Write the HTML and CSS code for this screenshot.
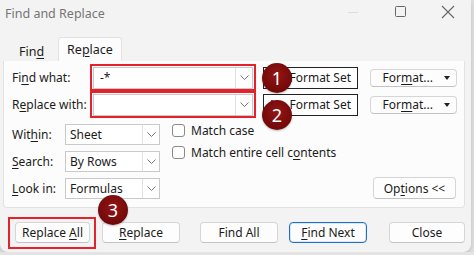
FILE: index.html
```html
<!DOCTYPE html>
<html lang="en">
<head>
  <meta charset="UTF-8">
  <title>Find and Replace</title>
  <link rel="stylesheet" href="styles.css">
</head>
<body>
<div class="window">

  <!-- Title bar -->
  <div class="titlebar">
    <span class="title">Find and Replace</span>
    <span class="tb-min"></span>
    <svg class="tb-max" width="12" height="12" viewBox="0 0 12 12"><rect x="0.5" y="0.5" width="10" height="10" rx="1" fill="none" stroke="#666" stroke-width="1"/></svg>
    <svg class="tb-close" width="14" height="14" viewBox="0 0 14 14"><path d="M1 1 L13 13 M13 1 L1 13" stroke="#666" stroke-width="1.1" fill="none"/></svg>
  </div>

  <!-- Tabs -->
  <div class="tabs">
    <div class="tab">Fin<u>d</u></div>
    <div class="tab active">Re<u>p</u>lace</div>
  </div>

  <div class="panel">
    <div class="row">
      <span class="label">Fi<u>n</u>d what:</span>
      <div class="mark">
        <div class="combo">
          <span class="combo-text">-*</span>
          <span class="combo-btn"><svg width="9" height="5" viewBox="0 0 9 5"><path d="M0.5 0.5 L4.5 4.5 L8.5 0.5" stroke="#777" fill="none"/></svg></span>
        </div>
      </div>
      <div class="preview">No Format Set</div>
      <button class="btn fmt"><span>For<u>m</u>at...</span><span class="tri"></span></button>
    </div>
    <div class="row">
      <span class="label">R<u>e</u>place with:</span>
      <div class="mark">
        <div class="combo">
          <span class="combo-text"></span>
          <span class="combo-btn"><svg width="9" height="5" viewBox="0 0 9 5"><path d="M0.5 0.5 L4.5 4.5 L8.5 0.5" stroke="#777" fill="none"/></svg></span>
        </div>
      </div>
      <div class="preview">No Format Set</div>
      <button class="btn fmt"><span>For<u>m</u>at...</span><span class="tri"></span></button>
    </div>

    <div class="options">
      <div class="selects">
        <div class="sel-row">
          <span class="sel-label">Wit<u>h</u>in:</span>
          <div class="select"><span class="select-text">Sheet</span><span class="combo-btn"><svg width="9" height="5" viewBox="0 0 9 5"><path d="M0.5 0.5 L4.5 4.5 L8.5 0.5" stroke="#777" fill="none"/></svg></span></div>
        </div>
        <div class="sel-row">
          <span class="sel-label"><u>S</u>earch:</span>
          <div class="select"><span class="select-text">By Rows</span><span class="combo-btn"><svg width="9" height="5" viewBox="0 0 9 5"><path d="M0.5 0.5 L4.5 4.5 L8.5 0.5" stroke="#777" fill="none"/></svg></span></div>
        </div>
        <div class="sel-row">
          <span class="sel-label"><u>L</u>ook in:</span>
          <div class="select"><span class="select-text">Formulas</span><span class="combo-btn"><svg width="9" height="5" viewBox="0 0 9 5"><path d="M0.5 0.5 L4.5 4.5 L8.5 0.5" stroke="#777" fill="none"/></svg></span></div>
        </div>
      </div>
      <div class="checks">
        <label class="check"><span class="box"></span><span>Match case</span></label>
        <label class="check"><span class="box"></span><span>Match entire cell c<u>o</u>ntents</span></label>
      </div>
      <button class="btn options-btn">Op<u>t</u>ions &lt;&lt;</button>
    </div>
  </div>

  <!-- Bottom buttons -->
  <div class="footer">
    <div class="mark-btn"><button class="btn foot w75">Replace <u>A</u>ll</button></div>
    <button class="btn foot w78 ml6"><u>R</u>eplace</button>
    <button class="btn foot w78 ml20">Find All</button>
    <button class="btn foot w78 ml11 primary"><u>F</u>ind Next</button>
    <button class="btn foot w76 ml22">Close</button>
  </div>

  <!-- annotation badges -->
  <span class="badge b1">1</span>
  <span class="badge b2">2</span>
  <span class="badge b3">3</span>
</div>
</body>
</html>
```

FILE: styles.css
```css
* {
  box-sizing: border-box;
}

html {
  background: #e4e4e4;
}

body {
  margin: 0;
  font-family: 'Noto Sans', 'Open Sans', sans-serif;
  font-size: 12px;
  color: #1b1b1b;
}

u {
  text-underline-offset: 2px;
}

.window {
  position: relative;
  width: 471px;
  height: 252px;
  background: #f3f3f3;
  border-radius: 0 0 8px 8px;
  box-shadow: 0 2px 6px rgba(0, 0, 0, 0.18);
}

/* title bar */
.titlebar {
  height: 30px;
  display: flex;
  align-items: center;
  padding-left: 5px;
}

.title {
  color: #757575;
  font-size: 12.5px;
  margin-top: -4px;
}

.tb-min {
  width: 10px;
  height: 1px;
  background: #dcdcdc;
  margin-left: auto;
  margin-top: -6px;
}

.tb-max {
  margin-left: 37px;
  margin-top: -6px;
}

.tb-close {
  margin-left: 34px;
  margin-right: 16px;
  margin-top: -6px;
}

/* tabs */
.tabs {
  height: 31px;
  display: flex;
  align-items: flex-end;
  padding-left: 5px;
}

.tab {
  height: 23px;
  padding-top: 5px;
  width: 53px;
  text-align: center;
  font-size: 12.5px;
}

.tab.active {
  height: 24px;
  width: 64px;
  padding-top: 3px;
  background: #fcfcfc;
  border: 1px solid #e2e2e2;
  border-bottom: none;
  border-radius: 3px 3px 0 0;
}

/* main panel */
.panel {
  width: 462px;
  height: 147px;
  margin-left: 3px;
  background: #fcfcfc;
  border: 1px solid #e2e2e2;
  border-top: none;
  border-radius: 0 0 4px 4px;
  padding: 3px 0 0 8px;
}

.row {
  display: flex;
  align-items: center;
  height: 27px;
}

.label {
  width: 78px;
}

.mark {
  width: 166px;
  height: 27px;
  border: 2px solid #e3222b;
  display: flex;
  align-items: center;
  padding: 0 1px;
}

.combo {
  width: 100%;
  height: 22px;
  display: flex;
  align-items: center;
  background: #fff;
  border: 1px solid #c9c9c9;
}

.combo-text {
  flex: 1;
  padding-left: 6px;
}

.combo-btn {
  width: 17px;
  height: 100%;
  border-left: 1px solid #e1e1e1;
  display: flex;
  align-items: center;
  justify-content: center;
}

.preview {
  width: 95px;
  height: 22px;
  margin-left: 7px;
  border: 1px solid #222;
  background: #fff;
  text-align: center;
  line-height: 20px;
}

.btn {
  font-family: inherit;
  font-size: 12px;
  color: #1b1b1b;
  background: #fdfdfd;
  border: 1px solid #d6d6d6;
  border-bottom-color: #c2c2c2;
  border-radius: 4px;
  padding: 0;
}

.fmt {
  width: 87px;
  height: 18px;
  margin-left: 12px;
  display: flex;
  align-items: center;
  justify-content: flex-end;
  padding-right: 6px;
  line-height: 1;
}

.tri {
  width: 0;
  height: 0;
  border-left: 3px solid transparent;
  border-right: 3px solid transparent;
  border-top: 4px solid #222;
  margin-left: 11px;
}

/* options */
.options {
  display: flex;
  margin-top: 6px;
}

.selects {
  display: flex;
  flex-direction: column;
  gap: 6px;
}

.sel-row {
  display: flex;
  align-items: center;
  height: 21px;
}

.sel-label {
  width: 53px;
}

.select {
  width: 95px;
  height: 21px;
  display: flex;
  align-items: center;
  background: #fff;
  border: 1px solid #c9c9c9;
}

.select-text {
  flex: 1;
  padding-left: 4px;
}

.checks {
  display: flex;
  flex-direction: column;
  gap: 9px;
  margin-left: 12px;
}

.check {
  display: flex;
  align-items: center;
  height: 13px;
  gap: 6px;
}

.box {
  width: 13px;
  height: 13px;
  border: 1px solid #8a8a8a;
  border-radius: 3px;
  background: #fff;
}

.options-btn {
  width: 83px;
  height: 22px;
  align-self: flex-end;
  margin-left: auto;
  margin-right: 8px;
}

/* footer */
.footer {
  display: flex;
  align-items: flex-start;
  margin-top: 9px;
  padding-left: 8px;
}

.mark-btn {
  border: 2px solid #e3222b;
  padding: 3px 4px 4px 5px;
}

.foot {
  height: 21px;
}

.w75 { width: 75px; }
.w76 { width: 76px; }
.w78 { width: 78px; }
.ml6 { margin: 5px 0 0 6px; }
.ml11 { margin: 5px 0 0 11px; }
.ml20 { margin: 5px 0 0 20px; }
.ml22 { margin: 5px 0 0 22px; }

.primary {
  border: 1px solid #1f6fc5;
  box-shadow: inset 0 0 0 1px #d8e8f8;
}

/* annotation badges */
.badge {
  position: absolute;
  width: 30px;
  height: 30px;
  border-radius: 50%;
  background: radial-gradient(circle at 50% 40%, #931515, #720909 70%);
  color: #fff;
  font-size: 18px;
  line-height: 30px;
  text-align: center;
  box-shadow: 0 1px 2px rgba(0, 0, 0, 0.25);
}

.b1 { left: 262px; top: 63px; }
.b2 { left: 262px; top: 100px; }
.b3 { left: 98px; top: 195px; }
```
